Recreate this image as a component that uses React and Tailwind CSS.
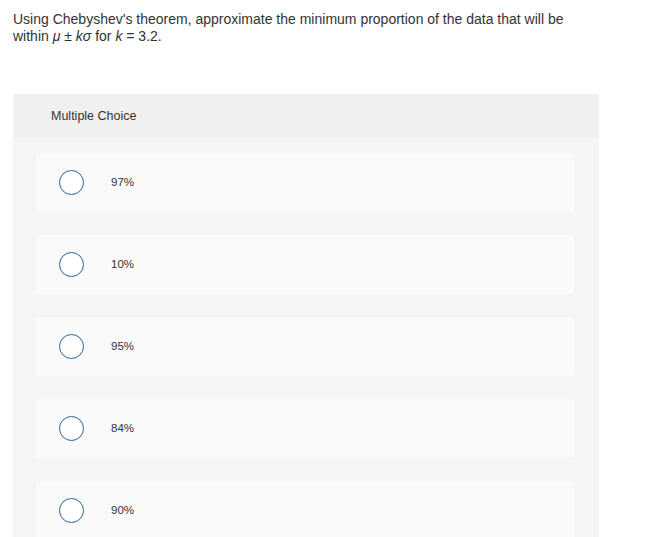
import React from 'react';

const options = ['97%', '10%', '95%', '84%', '90%'];

const App = () => {
  return (
    <div className="min-h-screen bg-white text-[#333] pt-[11px]" style={{ fontFamily: '"Liberation Sans", Arial, sans-serif' }}>
      <p className="px-[13px] text-[14px] leading-[17px]">
        Using Chebyshev's theorem, approximate the minimum proportion of the data that will be
        <br />
        within <i>μ</i> ± <i>kσ</i> for <i>k</i> = 3.2.
      </p>

      <div className="ml-[13px] mt-[49px] w-[586px] bg-[#f5f5f5]">
        <div className="h-[44px] bg-[#f0f0f0] flex items-center pl-[38px] text-[12.5px]">Multiple Choice</div>
        <div className="pt-[15px] pl-[23px] pr-[25px] flex flex-col gap-[23px]">
          {options.map((opt) => (
            <div key={opt} className="h-[59px] rounded-[3px] bg-[#fafafa] flex items-center">
              <span className="ml-[23px] w-[25px] h-[25px] rounded-full border-[1.5px] border-[#2a629a] bg-white"></span>
              <span className="ml-[27px] text-[11.5px]">{opt}</span>
            </div>
          ))}
        </div>
      </div>
    </div>
  );
};

export default App;
